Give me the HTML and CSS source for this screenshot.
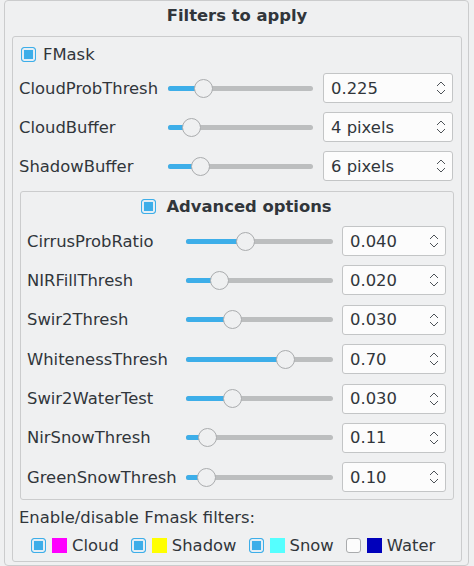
FILE: index.html
```html
<!DOCTYPE html>
<html lang="en">
<head>
    <meta charset="UTF-8">
    <meta name="viewport" content="width=device-width, initial-scale=1.0">
    <title>Filters to apply</title>
    <link rel="stylesheet" href="styles.css">
</head>
<body>
    <div class="panel">
        <div class="panel-title">Filters to apply</div>

        <div class="group fmask">
            <label class="check-line">
                <span class="check on"></span>
                <span>FMask</span>
            </label>

            <div class="row">
                <span class="label">CloudProbThresh</span>
                <div class="slider"><span class="fill" style="width:36px"></span><span class="handle" style="left:26px"></span></div>
                <div class="spin"><span>0.225</span><svg class="arrows" viewBox="0 0 10 14"><path d="M1 5 L5 1 L9 5 M1 9 L5 13 L9 9"/></svg></div>
            </div>
            <div class="row">
                <span class="label">CloudBuffer</span>
                <div class="slider"><span class="fill" style="width:24px"></span><span class="handle" style="left:14px"></span></div>
                <div class="spin"><span>4 pixels</span><svg class="arrows" viewBox="0 0 10 14"><path d="M1 5 L5 1 L9 5 M1 9 L5 13 L9 9"/></svg></div>
            </div>
            <div class="row">
                <span class="label">ShadowBuffer</span>
                <div class="slider"><span class="fill" style="width:33px"></span><span class="handle" style="left:23px"></span></div>
                <div class="spin"><span>6 pixels</span><svg class="arrows" viewBox="0 0 10 14"><path d="M1 5 L5 1 L9 5 M1 9 L5 13 L9 9"/></svg></div>
            </div>

            <div class="group advanced">
                <label class="check-line adv-title">
                    <span class="check on"></span>
                    <span>Advanced options</span>
                </label>

                <div class="row">
                    <span class="label">CirrusProbRatio</span>
                    <div class="slider"><span class="fill" style="width:60px"></span><span class="handle" style="left:50px"></span></div>
                    <div class="spin"><span>0.040</span><svg class="arrows" viewBox="0 0 10 14"><path d="M1 5 L5 1 L9 5 M1 9 L5 13 L9 9"/></svg></div>
                </div>
                <div class="row">
                    <span class="label">NIRFillThresh</span>
                    <div class="slider"><span class="fill" style="width:34px"></span><span class="handle" style="left:24px"></span></div>
                    <div class="spin"><span>0.020</span><svg class="arrows" viewBox="0 0 10 14"><path d="M1 5 L5 1 L9 5 M1 9 L5 13 L9 9"/></svg></div>
                </div>
                <div class="row">
                    <span class="label">Swir2Thresh</span>
                    <div class="slider"><span class="fill" style="width:47px"></span><span class="handle" style="left:37px"></span></div>
                    <div class="spin"><span>0.030</span><svg class="arrows" viewBox="0 0 10 14"><path d="M1 5 L5 1 L9 5 M1 9 L5 13 L9 9"/></svg></div>
                </div>
                <div class="row">
                    <span class="label">WhitenessThresh</span>
                    <div class="slider"><span class="fill" style="width:100px"></span><span class="handle" style="left:90px"></span></div>
                    <div class="spin"><span>0.70</span><svg class="arrows" viewBox="0 0 10 14"><path d="M1 5 L5 1 L9 5 M1 9 L5 13 L9 9"/></svg></div>
                </div>
                <div class="row">
                    <span class="label">Swir2WaterTest</span>
                    <div class="slider"><span class="fill" style="width:47px"></span><span class="handle" style="left:37px"></span></div>
                    <div class="spin"><span>0.030</span><svg class="arrows" viewBox="0 0 10 14"><path d="M1 5 L5 1 L9 5 M1 9 L5 13 L9 9"/></svg></div>
                </div>
                <div class="row">
                    <span class="label">NirSnowThresh</span>
                    <div class="slider"><span class="fill" style="width:22px"></span><span class="handle" style="left:12px"></span></div>
                    <div class="spin"><span>0.11</span><svg class="arrows" viewBox="0 0 10 14"><path d="M1 5 L5 1 L9 5 M1 9 L5 13 L9 9"/></svg></div>
                </div>
                <div class="row">
                    <span class="label">GreenSnowThresh</span>
                    <div class="slider"><span class="fill" style="width:21px"></span><span class="handle" style="left:11px"></span></div>
                    <div class="spin"><span>0.10</span><svg class="arrows" viewBox="0 0 10 14"><path d="M1 5 L5 1 L9 5 M1 9 L5 13 L9 9"/></svg></div>
                </div>
            </div>

            <div class="filters-label">Enable/disable Fmask filters:</div>
            <div class="legend">
                <label class="legend-item"><span class="check on"></span><span class="swatch cloud"></span>Cloud</label>
                <label class="legend-item"><span class="check on"></span><span class="swatch shadow"></span>Shadow</label>
                <label class="legend-item"><span class="check on"></span><span class="swatch snow"></span>Snow</label>
                <label class="legend-item"><span class="check"></span><span class="swatch water"></span>Water</label>
            </div>
        </div>
    </div>
</body>
</html>
```

FILE: styles.css
```css
body {
    margin: 0;
    padding: 0;
    background-color: #eff0f1;
    font-family: "DejaVu Sans", "Noto Sans", sans-serif;
    font-size: 16.4px;
    color: #31363b;
}

.panel {
    box-sizing: border-box;
    width: 465px;
    height: 566px;
    margin-left: 4px;
    border: 1px solid #cbcccd;
    border-radius: 4px;
    padding: 0 6px 4px 7px;
}

.panel-title {
    height: 30px;
    line-height: 30px;
    text-align: center;
    font-weight: bold;
    margin-bottom: 5px;
}

.group {
    border: 1px solid #cbcccd;
    border-radius: 3px;
}

.fmask {
    height: 526px;
    box-sizing: border-box;
    padding: 0 7px 0 6px;
}

.check-line {
    display: flex;
    align-items: center;
    gap: 7px;
}

.fmask > .check-line {
    height: 34px;
    margin-left: 2px;
}

.check {
    box-sizing: border-box;
    width: 15px;
    height: 15px;
    border: 1px solid #a9abad;
    border-radius: 3px;
    background-color: #fcfcfc;
    flex-shrink: 0;
}

.check.on {
    border-color: #3daee9;
    background-color: #3daee9;
    box-shadow: inset 0 0 0 2px #e4eef5;
}

.row {
    display: flex;
    align-items: center;
    height: 30px;
    margin-top: 9px;
}

.fmask > .row:first-of-type {
    margin-top: 2px;
}

.label {
    width: 149px;
    flex-shrink: 0;
    white-space: nowrap;
}

.slider {
    position: relative;
    width: 145px;
    height: 5px;
    border-radius: 3px;
    background-color: #bcbebf;
    margin-right: 10px;
    flex-shrink: 0;
}

.fill {
    position: absolute;
    left: 0;
    top: 0;
    height: 5px;
    border-radius: 3px;
    background-color: #3daee9;
}

.handle {
    position: absolute;
    top: -7px;
    box-sizing: border-box;
    width: 19px;
    height: 19px;
    border-radius: 50%;
    background-color: #eff0f1;
    border: 1px solid #aaacae;
}

.spin {
    box-sizing: border-box;
    display: flex;
    align-items: center;
    justify-content: space-between;
    width: 130px;
    height: 30px;
    padding: 0 6px 0 7px;
    background-color: #fcfcfc;
    border: 1px solid #c3c5c6;
    border-radius: 3px;
    flex-shrink: 0;
}

.arrows {
    width: 10px;
    height: 14px;
    fill: none;
    stroke: #4d5257;
    stroke-width: 1;
}

.advanced {
    margin: 10px 0 0 1px;
    padding: 0 7px 7px 6px;
}

.adv-title {
    justify-content: center;
    height: 28px;
    margin-top: 0;
    font-weight: bold;
    gap: 10px;
}

.advanced .row {
    margin-top: 9.4px;
}

.advanced .row:first-of-type {
    margin-top: 6px;
}

.advanced .label {
    width: 159px;
}

.advanced .slider {
    width: 147px;
    margin-right: 9px;
}

.advanced .spin {
    width: 104px;
}

.filters-label {
    margin-top: 7px;
    height: 22px;
    line-height: 22px;
}

.legend {
    display: flex;
    align-items: center;
    gap: 12px;
    margin-top: 2px;
    padding-left: 12px;
    height: 28px;
    white-space: nowrap;
}

.legend-item {
    display: flex;
    align-items: center;
}

.legend-item .check {
    margin-right: 6px;
}

.swatch {
    width: 15px;
    height: 15px;
    margin-right: 5px;
}

.cloud { background-color: #ff00ff; }
.shadow { background-color: #ffff00; }
.snow { background-color: #55ffff; }
.water { background-color: #0000bb; }
```
